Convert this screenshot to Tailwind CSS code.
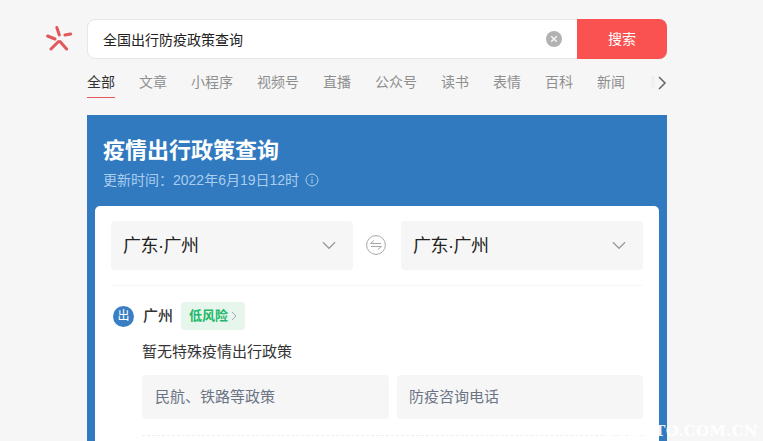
<!DOCTYPE html>
<html lang="zh-CN">
<head>
<meta charset="UTF-8" />
<meta name="viewport" content="width=device-width, initial-scale=1.0" />
<title>疫情出行政策查询</title>
<script src="https://cdn.jsdelivr.net/npm/@tailwindcss/browser@4"></script>
</head>
<body class="relative h-[441px] w-[763px] overflow-hidden bg-[#f6f6f6] font-['Liberation_Sans','Noto_Sans_CJK_SC',sans-serif]">
  <div class="flex pt-[19px]">
    <!-- logo -->
    <div class="flex w-[87px] justify-end pr-[15px] pt-[6px]">
      <svg width="26" height="26" viewBox="0 0 26 26" fill="none" stroke="#e0575c" stroke-width="3" stroke-linecap="round">
        <path d="M10.8 2.5 L13.3 10" />
        <path d="M1.6 11 L9 14" />
        <path d="M19 10 L24.6 9" />
        <path d="M12.3 16.7 L5 24" />
        <path d="M14.2 16.7 L20.6 24" />
      </svg>
    </div>
    <div class="w-[580px]">
      <!-- search -->
      <div class="flex h-10 rounded-lg border border-[#e6e6e6] bg-white">
        <div class="flex flex-1 items-center pl-[15px] pr-[16px] text-[14px] text-[#222]">
          <span class="flex-1 pt-[2px]">全国出行防疫政策查询</span>
          <svg width="16" height="16" viewBox="0 0 16 16">
            <circle cx="8" cy="8" r="8" fill="#b2b2b2" />
            <path d="M5.2 5.2 L10.8 10.8 M10.8 5.2 L5.2 10.8" stroke="#f4f4f4" stroke-width="1.5" />
          </svg>
        </div>
        <div class="m-[-1px] flex w-[90px] items-center justify-center rounded-r-lg bg-[#fa5151] text-[14px] text-white">搜索</div>
      </div>
      <!-- tabs -->
      <div class="relative mt-[13px] flex h-[26px] gap-[24px] text-[14px] leading-[20px] text-[#8f8f8f]">
        <span class="h-[26px] border-b border-[#e5575c] text-[#333]">全部</span>
        <span>文章</span>
        <span>小程序</span>
        <span>视频号</span>
        <span>直播</span>
        <span>公众号</span>
        <span>读书</span>
        <span>表情</span>
        <span>百科</span>
        <span>新闻</span>
        <span class="absolute right-[12px] top-[4px] h-[12px] w-[4px] bg-[#f0f0f0]"></span>
        <svg class="absolute right-0 top-[4px]" width="10" height="14" viewBox="0 0 10 14" fill="none" stroke="#666" stroke-width="1.5">
          <path d="M2 1 L8 7 L2 13" />
        </svg>
      </div>
      <!-- panel -->
      <div class="mt-[17px] h-[326px] overflow-hidden bg-[#317ac0] px-2">
        <div class="px-2 pt-[21px]">
          <h1 class="text-[22px] font-bold leading-[30px] text-white">疫情出行政策查询</h1>
          <p class="mt-[4px] flex items-center gap-[6px] text-[14px] leading-[20px] text-[#a9cdee]">
            更新时间：2022年6月19日12时
            <svg width="14" height="14" viewBox="0 0 14 14" fill="none" stroke="#a9cdee">
              <circle cx="7" cy="7" r="6" />
              <path d="M7 6 V10.5 M7 3.5 V5" />
            </svg>
          </p>
        </div>
        <div class="mt-[16px] h-[235px] rounded-t-[5px] bg-white px-4 pt-[15px]">
          <!-- route -->
          <div class="flex items-center border-b border-[#f7f7f7] pb-[15px]">
            <div class="flex h-[49px] w-[242px] items-center justify-between rounded bg-[#f6f6f6] pl-3 pr-[17px] text-[18px] tracking-[-0.5px] text-[#222]">
              <span class="pt-[1px]">广东·广州</span>
              <svg width="14" height="9" viewBox="0 0 15 9" fill="none" stroke="#999" stroke-width="1.3"><path d="M1 1 L7.5 7.5 L14 1" /></svg>
            </div>
            <div class="flex w-[48px] justify-center pr-[2px]">
              <svg class="-mt-[1px]" width="20" height="20" viewBox="0 0 20 20" fill="none" stroke="#a8a8a8">
                <circle cx="10" cy="10" r="9.4" />
                <path d="M4.5 8.5 L8 5.5 M4.5 8.5 H15 M15.5 11.5 L12 14.5 M15.5 11.5 H5" />
              </svg>
            </div>
            <div class="flex h-[49px] w-[242px] items-center justify-between rounded bg-[#f6f6f6] pl-3 pr-[17px] text-[18px] tracking-[-0.5px] text-[#222]">
              <span class="pt-[1px]">广东·广州</span>
              <svg width="14" height="9" viewBox="0 0 15 9" fill="none" stroke="#999" stroke-width="1.3"><path d="M1 1 L7.5 7.5 L14 1" /></svg>
            </div>
          </div>
          <!-- departure -->
          <div class="flex items-center pt-4">
            <span class="ml-[2px] flex h-[21px] w-[21px] items-center justify-center rounded-full bg-[#3a7fc4] text-[12px] text-white">出</span>
            <span class="ml-[9px] text-[15px] font-medium text-[#333]">广州</span>
            <span class="ml-2 flex h-7 items-center gap-[3px] rounded bg-[#e6f6ed] px-2 text-[13px] font-bold text-[#22b868]">
              低风险
              <svg width="6" height="10" viewBox="0 0 6 10" fill="none" stroke="#aaa"><path d="M1 1 L5 5 L1 9" /></svg>
            </span>
          </div>
          <p class="ml-[31px] mt-[12px] text-[15px] leading-[20px] text-[#333]">暂无特殊疫情出行政策</p>
          <div class="ml-[31px] mt-[13px] flex gap-2 border-b border-dashed border-[#eeeeee] pb-[16px]">
            <div class="flex h-[44px] w-[247px] flex-none items-center rounded-sm bg-[#f6f6f6] px-[13px] text-[15px] text-[#6b7485]">民航、铁路等政策</div>
            <div class="flex h-[44px] flex-1 items-center rounded-sm bg-[#f6f6f6] px-3 text-[15px] text-[#6b7485]">防疫咨询电话</div>
          </div>
        </div>
      </div>
    </div>
  </div>
  <span class="absolute right-[5px] top-[424px] font-['DejaVu_Serif',serif] text-[15px] font-bold leading-[15px] tracking-[0.3px] text-white/90">PCAUTO.COM.CN</span>
</body>
</html>
